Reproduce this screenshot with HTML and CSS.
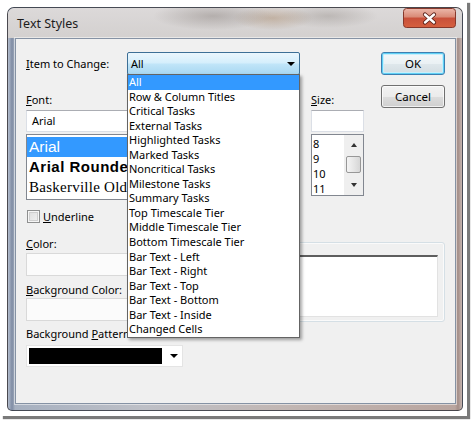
FILE: index.html
```html
<!DOCTYPE html>
<html>
<head>
<meta charset="utf-8">
<title>Text Styles</title>
<link rel="stylesheet" href="styles.css">
</head>
<body>
<div class="photo">
  <div class="win">
    <div class="titlebar">
      <div class="title">Text Styles</div>
      <div class="close">
        <svg width="53" height="20" viewBox="0 0 53 20">
          <defs>
            <linearGradient id="cg" x1="0" y1="0" x2="0" y2="1">
              <stop offset="0" stop-color="#ecb8ab"/>
              <stop offset="0.45" stop-color="#d98a76"/>
              <stop offset="0.5" stop-color="#c8503a"/>
              <stop offset="1" stop-color="#d6603f"/>
            </linearGradient>
          </defs>
          <rect x="0.5" y="0.5" width="52" height="19" rx="3" fill="url(#cg)" stroke="#86382b"/>
          <path d="M22 6.5 L31 14.5 M31 6.5 L22 14.5" stroke="#5a2018" stroke-width="4.2" stroke-linecap="round" fill="none"/>
          <path d="M22 6.5 L31 14.5 M31 6.5 L22 14.5" stroke="#ffffff" stroke-width="2.4" stroke-linecap="round" fill="none"/>
        </svg>
      </div>
    </div>
    <div class="client">
      <div class="top">
        <div class="main">
          <div class="item-row">
            <div class="item-label"><u>I</u>tem to Change:</div>
            <div class="combo">
              <span class="combo-text">All</span>
              <span class="arrow"></span>
              <ul class="droplist">
                <li class="sel">All</li>
                <li>Row &amp; Column Titles</li>
                <li>Critical Tasks</li>
                <li>External Tasks</li>
                <li>Highlighted Tasks</li>
                <li>Marked Tasks</li>
                <li>Noncritical Tasks</li>
                <li>Milestone Tasks</li>
                <li>Summary Tasks</li>
                <li>Top Timescale Tier</li>
                <li>Middle Timescale Tier</li>
                <li>Bottom Timescale Tier</li>
                <li>Bar Text - Left</li>
                <li>Bar Text - Right</li>
                <li>Bar Text - Top</li>
                <li>Bar Text - Bottom</li>
                <li>Bar Text - Inside</li>
                <li>Changed Cells</li>
              </ul>
            </div>
          </div>
          <div class="font-row">
            <div class="font-col">
              <div class="lbl"><u>F</u>ont:</div>
              <div class="textbox">Arial</div>
              <ul class="fontlist">
                <li class="sel f-arial">Arial</li>
                <li class="f-rounded">Arial Rounded MT Bold</li>
                <li class="f-bask">Baskerville Old Face</li>
              </ul>
            </div>
            <div class="size-col">
              <div class="lbl"><u>S</u>ize:</div>
              <div class="textbox"></div>
              <div class="sizelist">
                <ul class="sizes">
                  <li>8</li>
                  <li>9</li>
                  <li>10</li>
                  <li>11</li>
                </ul>
                <div class="vscroll">
                  <div class="sb-btn"><span class="tri-up"></span></div>
                  <div class="sb-track"><div class="thumb"></div></div>
                  <div class="sb-btn sb-down"><span class="tri-down"></span></div>
                </div>
              </div>
            </div>
          </div>
        </div>
        <div class="buttons">
          <div class="btn default">OK</div>
          <div class="btn">Cancel</div>
        </div>
      </div>
      <div class="check-row">
        <span class="checkbox"></span>
        <span><u>U</u>nderline</span>
      </div>
      <div class="bottom">
        <div class="left-col">
          <div class="lbl"><u>C</u>olor:</div>
          <div class="colorbox"></div>
          <div class="lbl lbl-bg"><u>B</u>ackground Color:</div>
          <div class="colorbox colorbox-bg"></div>
          <div class="lbl lbl-pat">Background <u>P</u>attern:</div>
          <div class="patcombo">
            <span class="patfill"></span>
            <span class="arrow"></span>
          </div>
        </div>
        <div class="group">
          <div class="preview"></div>
        </div>
      </div>
    </div>
  </div>
</div>
</body>
</html>
```

FILE: styles.css
```css
* { box-sizing: border-box; }
html, body { margin: 0; padding: 0; background: #ffffff; }
body {
  width: 474px;
  height: 422px;
  overflow: hidden;
  font-family: "Noto Sans", "Open Sans", sans-serif;
  font-size: 11px;
  color: #000;
}
ul { list-style: none; margin: 0; padding: 0; }
u { text-decoration: underline; text-underline-offset: 1px; text-decoration-thickness: 1px; }

.photo {
  width: 467px;
  height: 416px;
  padding: 7px 4px 5px 7px;
  background: #ffffff;
  box-shadow: 3px 3px 1px #7a7a7a;
}

.win {
  width: 456px;
  height: 404px;
  border: 1px solid rgba(40, 44, 52, 0.78);
  border-radius: 7px 7px 5px 5px;
  overflow: hidden;
  display: flex;
  flex-direction: column;
  background: linear-gradient(90deg, #b4bece 0px, #7f8ca4 4px, #a6b0c0 7px, #bec0c7 30%, #c2b7b4 60%, #b9a59f calc(100% - 7px), #a48e88 calc(100% - 4px), #c6b5b0 100%);
}

.titlebar {
  height: 30px;
  flex: none;
  display: flex;
  justify-content: space-between;
  padding: 0 6px 0 9px;
  background:
    radial-gradient(ellipse 60px 14px at 205px 8px, rgba(110, 100, 95, 0.35), transparent),
    radial-gradient(ellipse 40px 12px at 265px 10px, rgba(150, 110, 70, 0.35), transparent),
    radial-gradient(ellipse 50px 12px at 320px 8px, rgba(120, 112, 105, 0.3), transparent),
    linear-gradient(180deg, #dcd9d9 0%, #d3d0cf 100%);
}
.title {
  font-size: 12.5px;
  line-height: 16px;
  margin-top: 8px;
  color: #1c1c1c;
}
.close { width: 53px; height: 20px; }
.close svg { display: block; }

.client {
  flex: 1;
  margin: 0 6px 6px 7px;
  background: #f0f0f0;
  border: 1px solid #8592a4;
  box-shadow: 0 0 0 1px rgba(255, 255, 255, 0.5);
  padding: 13px 10px 0 10px;
}

.top { display: flex; gap: 17px; }
.main { width: 338px; }

.item-row { display: flex; align-items: center; height: 23px; }
.item-label { width: 101px; line-height: 15px; }

.combo {
  position: relative;
  width: 173px;
  height: 23px;
  border: 1px solid #3d6f96;
  border-radius: 2px;
  background: linear-gradient(180deg, #eaf6fd 0%, #d6effc 45%, #bfe4f8 55%, #a9d8f2 100%);
  display: flex;
  align-items: center;
  padding-left: 3px;
}
.combo-text { flex: 1; line-height: 15px; }
.arrow {
  width: 0;
  height: 0;
  border-left: 4px solid transparent;
  border-right: 4px solid transparent;
  border-top: 4px solid #000;
  margin-right: 4px;
}

.droplist {
  position: absolute;
  left: -1px;
  top: 21px;
  width: 173px;
  z-index: 10;
  background: #ffffff;
  border: 1px solid #646464;
  box-shadow: 2px 2px 3px rgba(0, 0, 0, 0.35);
}
.droplist li {
  height: 14.55px;
  line-height: 14.55px;
  padding-left: 1px;
  white-space: nowrap;
}
.droplist li.sel { background: #3399ff; color: #fff; }

.font-row { display: flex; gap: 11px; margin-top: 17px; }
.font-col { width: 274px; }
.size-col { width: 53px; }
.lbl { line-height: 15px; white-space: nowrap; }

.textbox {
  margin-top: 3px;
  height: 22px;
  background: #fff;
  border: 1px solid #dbdfe6;
  border-top-color: #abadb3;
  line-height: 20px;
  padding-left: 5px;
}

.fontlist {
  margin-top: 2px;
  height: 66px;
  background: #fff;
  border: 1px solid #828790;
  padding-top: 2px;
  overflow: hidden;
}
.fontlist li { height: 20px; line-height: 20px; padding-left: 2px; white-space: nowrap; }
.fontlist li.sel { background: #3399ff; color: #fff; }
.f-arial { font-family: "Liberation Sans", Arial, sans-serif; font-size: 15.5px; }
.f-rounded { font-family: "Liberation Sans", Arial, sans-serif; font-size: 15px; font-weight: bold; letter-spacing: 0.5px; }
.f-bask { font-family: "Liberation Serif", "Times New Roman", serif; font-size: 15px; letter-spacing: 0.25px; line-height: 21px; }

.sizelist {
  margin-top: 2px;
  height: 62px;
  background: #fff;
  border: 1px solid #828790;
  display: flex;
}
.sizes { flex: 1; padding-top: 1px; }
.sizes li { height: 15px; line-height: 15px; padding-left: 1px; }
.vscroll {
  width: 19px;
  background: #efefef;
  display: flex;
  flex-direction: column;
}
.sb-btn { height: 19px; display: flex; align-items: center; justify-content: center; }
.sb-down { height: 20px; }
.sb-track { height: 21px; padding: 2px 2px 0 2px; }
.thumb {
  height: 17px;
  border: 1px solid #979797;
  border-radius: 2px;
  background: linear-gradient(90deg, #f4f4f4 0%, #e6e6e6 50%, #d6d6d6 100%);
}
.tri-up, .tri-down { width: 0; height: 0; border-left: 3.5px solid transparent; border-right: 3.5px solid transparent; }
.tri-up { border-bottom: 4px solid #333; }
.tri-down { border-top: 4px solid #333; }

.buttons { width: 64px; display: flex; flex-direction: column; gap: 10px; }
.btn {
  height: 23px;
  border: 1px solid #707070;
  border-radius: 3px;
  background: linear-gradient(180deg, #f2f2f2 0%, #ebebeb 50%, #dddddd 50%, #cfcfcf 100%);
  box-shadow: inset 0 0 0 1px rgba(255, 255, 255, 0.7);
  text-align: center;
  line-height: 21px;
  font-size: 11.5px;
}
.btn.default {
  border-color: #3c7fb1;
  box-shadow: inset 0 0 0 1px #5fd0f5, inset 0 0 0 2px #c8eefb;
  background: linear-gradient(180deg, #f4f8fa 0%, #eaf1f4 50%, #dfe8ec 50%, #d3dde2 100%);
}

.check-row { margin-top: 9px; height: 15px; display: flex; align-items: center; gap: 3px; line-height: 15px; }
.checkbox {
  width: 13px;
  height: 13px;
  margin-left: 1px;
  border: 1px solid #8e8f8f;
  background: linear-gradient(135deg, #dcdcdc 0%, #f3f3f3 100%);
  box-shadow: inset 0 0 0 1px #f6f6f6, inset 0 0 0 2px #cfcfcf;
}

.bottom { display: flex; gap: 10px; margin-top: 12px; }
.left-col { width: 170px; }
.colorbox {
  margin-top: 2px;
  height: 23px;
  background: #fbfbfb;
  border: 1px solid #d9d9d9;
}
.lbl-bg { margin-top: 6px; }
.colorbox-bg { margin-top: 1px; }
.lbl-pat { margin-top: 5px; }
.patcombo {
  margin-top: 4px;
  width: 157px;
  height: 22px;
  background: #fff;
  border: 1px solid #e4e4e4;
  display: flex;
  align-items: center;
  padding-left: 2px;
  gap: 8px;
}
.patfill { width: 133px; height: 16px; background: #000; }
.patcombo .arrow { margin-right: 0; }

.group {
  flex: 1;
  margin-top: 6px;
  height: 80px;
  border: 1px solid #d5dfe5;
  border-radius: 3px;
  box-shadow: inset 0 0 0 1px #fafafa;
  padding: 12px 6px 0 60px;
}
.preview {
  height: 62px;
  background: #fff;
  border: 1px solid #e2e2e2;
  border-top: 2px solid #5e5e5e;
}
```
